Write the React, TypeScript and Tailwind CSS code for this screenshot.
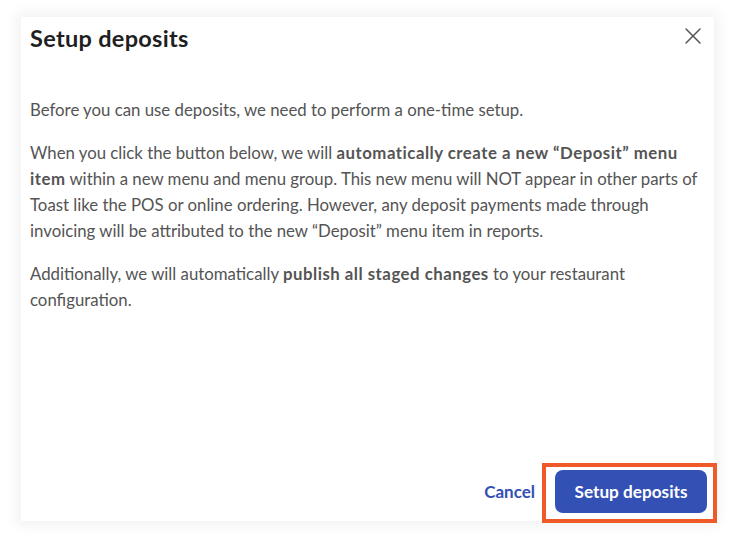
import React from 'react';

const CloseIcon: React.FC = () => (
  <svg width="18" height="18" viewBox="0 0 18 18" fill="none" stroke="#555" strokeWidth="1.5" strokeLinecap="round">
    <path d="M2 2L16 16M16 2L2 16" />
  </svg>
);

const App: React.FC = () => {
  return (
    <div className="w-[738px] h-[544px] bg-white relative font-['Lato',sans-serif]">
      <div className="absolute left-[21px] top-[17px] w-[693px] h-[504px] bg-white shadow-[0_0_14px_4px_rgba(0,0,0,0.06)] flex flex-col">
        <div className="flex items-start justify-between pl-[9px] pr-[12px] pt-[6px]">
          <h2 className="text-[23.5px] leading-[30px] font-bold text-[#1f1f1f] tracking-[0.3px]">Setup deposits</h2>
          <button className="mt-[4px]" aria-label="Close">
            <CloseIcon />
          </button>
        </div>
        <div className="pl-[9px] pr-[4px] pt-[44px] text-[16.8px] leading-[26px] text-[#545454] flex flex-col gap-[17px]">
          <p>Before you can use deposits, we need to perform a one-time setup.</p>
          <p>
            When you click the button below, we will <b className="font-bold tracking-[0.5px]">automatically create a new “Deposit” menu item</b> within a new menu and menu group. This new menu will NOT appear in other parts of Toast like the POS or online ordering. However, any deposit payments made through invoicing will be attributed to the new “Deposit” menu item in reports.
          </p>
          <p>
            Additionally, we will automatically <b className="font-bold tracking-[0.5px]">publish all staged changes</b> to your restaurant configuration.
          </p>
        </div>
        <div className="mt-auto flex items-center justify-end gap-[20px] pr-[7px] pb-[8px]">
          <button className="text-[17px] font-bold text-[#3350b4]">Cancel</button>
          <button className="w-[152px] h-[43px] rounded-[8px] bg-[#3350b4] text-white text-[17.2px] font-bold">Setup deposits</button>
        </div>
      </div>
      <div className="absolute left-[542px] top-[463px] w-[175px] h-[60px] border-[4px] border-[#f05a28]" />
    </div>
  );
};

export default App;
